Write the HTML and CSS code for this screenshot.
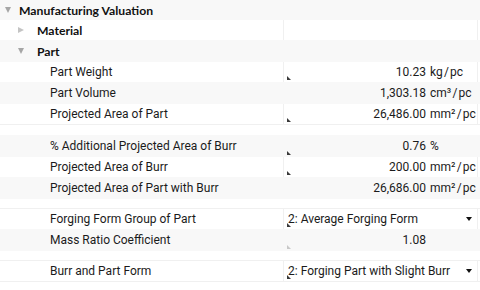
FILE: index.html
```html
<!DOCTYPE html>
<html>
<head>
<meta charset="utf-8">
<link rel="stylesheet" href="styles.css">
</head>
<body>
<div class="grid">
  <div class="row head alt">
    <div class="label l0"><span class="tri down"></span><span class="bold">Manufacturing Valuation</span></div>
  </div>
  <div class="row">
    <div class="label l1"><span class="tri right"></span><span class="bold">Material</span></div>
    <div class="value"></div><div class="tail"></div>
  </div>
  <div class="row alt">
    <div class="label l1"><span class="tri down"></span><span class="bold">Part</span></div>
  </div>
  <div class="row">
    <div class="label l2">Part Weight</div>
    <div class="value"><span class="mark"></span><span class="num">10.23</span><span class="unit">kg&#8202;/&#8202;pc</span></div><div class="tail"></div>
  </div>
  <div class="row alt">
    <div class="label l2">Part Volume</div>
    <div class="value"><span class="num">1,303.18</span><span class="unit">cm³&#8202;/&#8202;pc</span></div><div class="tail"></div>
  </div>
  <div class="row bb">
    <div class="label l2">Projected Area of Part</div>
    <div class="value"><span class="mark"></span><span class="num">26,486.00</span><span class="unit">mm²&#8202;/&#8202;pc</span></div><div class="tail"></div>
  </div>
  <div class="gap g1"></div>
  <div class="row alt">
    <div class="label l2">% Additional Projected Area of Burr</div>
    <div class="value"><span class="mark"></span><span class="num">0.76</span><span class="unit">%</span></div><div class="tail"></div>
  </div>
  <div class="row">
    <div class="label l2">Projected Area of Burr</div>
    <div class="value"><span class="mark"></span><span class="num">200.00</span><span class="unit">mm²&#8202;/&#8202;pc</span></div><div class="tail"></div>
  </div>
  <div class="row alt">
    <div class="label l2">Projected Area of Part with Burr</div>
    <div class="value"><span class="num">26,686.00</span><span class="unit">mm²&#8202;/&#8202;pc</span></div><div class="tail"></div>
  </div>
  <div class="gap g2"></div>
  <div class="row">
    <div class="label l2">Forging Form Group of Part</div>
    <div class="value combo"><span class="mark"></span><span class="text">2: Average Forging Form</span><span class="arrow"></span></div><div class="tail"></div>
  </div>
  <div class="row alt">
    <div class="label l2">Mass Ratio Coefficient</div>
    <div class="value"><span class="mark light"></span><span class="num">1.08</span><span class="unit"></span></div><div class="tail"></div>
  </div>
  <div class="gap g2"></div>
  <div class="row bb">
    <div class="label l2">Burr and Part Form</div>
    <div class="value combo"><span class="mark"></span><span class="text">2: Forging Part with Slight Burr</span><span class="arrow"></span></div><div class="tail"></div>
  </div>
</div>
</body>
</html>
```

FILE: styles.css
```css
* { box-sizing: border-box; }
html, body { margin: 0; padding: 0; background: #ffffff; }
body {
  font-family: Roboto, "Noto Sans", sans-serif;
  font-size: 12px;
  color: #1b1b1b;
  width: 480px;
  height: 290px;
  overflow: hidden;
}
.grid { display: flex; flex-direction: column; width: 480px; }
.row {
  display: flex;
  height: 20px;
  align-items: stretch;
  background: #ffffff;
}
.row.alt { height: 22px; background: #f8f8f8; }
.row.head { height: 20px; }
.row.bb { height: 21px; border-bottom: 1px solid #f0f0f0; }
.gap { background: #ffffff; }
.g1 { height: 10px; }
.g2 { height: 10px; border-bottom: 1px solid #f0f0f0; }
.label {
  width: 283px;
  display: flex;
  align-items: center;
  white-space: nowrap;
  overflow: hidden;
}
.l0 { padding-left: 5px; }
.l1 { padding-left: 18px; }
.l2 { padding-left: 50px; }
.bold {
  font-family: Lato, Roboto, sans-serif;
  font-size: 12.2px;
  font-weight: 700;
  color: #111111;
}
.l0 .bold { margin-left: 8px; }
.l1 .bold { margin-left: 13px; }
.tri { width: 0; height: 0; display: inline-block; }
.tri.down {
  border-left: 3.5px solid transparent;
  border-right: 3.5px solid transparent;
  border-top: 6px solid #a6a6a6;
}
.tri.right {
  border-top: 3.5px solid transparent;
  border-bottom: 3.5px solid transparent;
  border-left: 6px solid #c4c4c4;
}
.value {
  position: relative;
  width: 194px;
  border-left: 1px solid #f0f0f0;
  display: flex;
  align-items: center;
  justify-content: flex-end;
  white-space: nowrap;
}
.row.alt .value, .row.alt .tail { border-left-color: #f8f8f8; }
.tail { width: 3px; border-left: 1px solid #f0f0f0; }
.num { text-align: right; }
.unit { width: 51px; padding-left: 4px; }
.mark {
  position: absolute;
  left: 3px;
  bottom: 2px;
  width: 0; height: 0;
  border-top: 4px solid transparent;
  border-left: 4px solid #3a3a3a;
}
.mark.light { border-left-color: #c8c8c8; }
.combo { justify-content: space-between; padding-left: 4px; padding-right: 5px; }
.arrow {
  width: 0; height: 0;
  border-left: 3.5px solid transparent;
  border-right: 3.5px solid transparent;
  border-top: 4px solid #111111;
}
```
